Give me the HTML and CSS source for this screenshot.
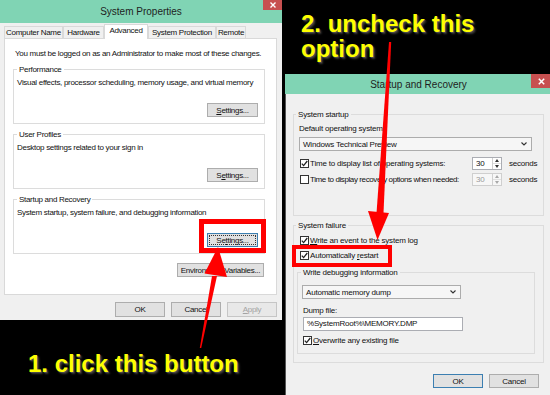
FILE: index.html
```html
<!DOCTYPE html>
<html>
<head>
<meta charset="utf-8">
<title>System Properties - Startup and Recovery</title>
<link rel="stylesheet" href="styles.css">
</head>
<body>
<div class="desk">

  <div class="win sys">
    <div class="tbar">
      <span class="ttl">System Properties</span>
      <span class="cls cls-sys"><svg width="6" height="6" viewBox="0 0 6 6"><path d="M0.5 0.5L5.5 5.5M5.5 0.5L0.5 5.5" stroke="#fff" stroke-width="1.4"/></svg></span>
    </div>
    <div class="tabs">
      <div class="tab t1">Computer Name</div>
      <div class="tab t2">Hardware</div>
      <div class="tab t3 sel">Advanced</div>
      <div class="tab t4">System Protection</div>
      <div class="tab t5">Remote</div>
    </div>
    <div class="panel">
      <div class="note">You must be logged on as an Administrator to make most of these changes.</div>
      <div class="grp">
        <div class="lgd">Performance</div>
        <div class="desc">Visual effects, processor scheduling, memory usage, and virtual memory</div>
        <div class="btn set"><u>S</u>ettings...</div>
      </div>
      <div class="grp">
        <div class="lgd">User Profiles</div>
        <div class="desc">Desktop settings related to your sign in</div>
        <div class="btn set">S<u>e</u>ttings...</div>
      </div>
      <div class="grp">
        <div class="lgd">Startup and Recovery</div>
        <div class="desc">System startup, system failure, and debugging information</div>
        <div class="btn set focus">Se<u>t</u>tings...</div>
      </div>
      <div class="btn env">Environme<u>n</u>t Variables...</div>
    </div>
    <div class="dlg">
      <div class="btn db">OK</div>
      <div class="btn db">Cancel</div>
      <div class="btn db dis"><u>A</u>pply</div>
    </div>
  </div>

  <div class="win sr">
    <div class="tbar sr-tbar">
      <span class="ttl">Startup and Recovery</span>
      <span class="cls cls-sr"><svg width="7" height="7" viewBox="0 0 7 7"><path d="M0.8 0.8L6.2 6.2M6.2 0.8L0.8 6.2" stroke="#fff" stroke-width="1.5"/></svg></span>
    </div>
    <div class="body">
      <div class="rgrp g-start">
        <div class="lgd rl">System startup</div>
        <div class="lbl">Default operating system:</div>
        <div class="dd dd1"><span>Windows Technical Preview</span><svg width="6" height="4" viewBox="0 0 6 4"><path d="M0.5 0.5L3 3L5.5 0.5" fill="none" stroke="#333" stroke-width="1.1"/></svg></div>
        <div class="row r1">
          <div class="cbl"><span class="cb"><svg width="7" height="7" viewBox="0 0 7 7"><path d="M0.8 3.6L2.6 5.6L6.3 1" fill="none" stroke="#222" stroke-width="1.3"/></svg></span><span>Time to display list of operating systems:</span></div>
          <div class="spin"><span class="v">30</span><span class="arr"><span class="up"></span><span class="dn"></span></span></div>
          <div>seconds</div>
        </div>
        <div class="row r2">
          <div class="cbl"><span class="cb"></span><span class="tight">Time to display recovery options when needed:</span></div>
          <div class="spin off"><span class="v">30</span><span class="arr"><span class="up"></span><span class="dn"></span></span></div>
          <div>seconds</div>
        </div>
      </div>

      <div class="rgrp g-fail">
        <div class="lgd rl">System failure</div>
        <div class="cbl crow c1"><span class="cb"><svg width="7" height="7" viewBox="0 0 7 7"><path d="M0.8 3.6L2.6 5.6L6.3 1" fill="none" stroke="#222" stroke-width="1.3"/></svg></span><span><u>W</u>rite an event to the system log</span></div>
        <div class="cbl crow c2"><span class="cb"><svg width="7" height="7" viewBox="0 0 7 7"><path d="M0.8 3.6L2.6 5.6L6.3 1" fill="none" stroke="#222" stroke-width="1.3"/></svg></span><span>Automatically <u>r</u>estart</span></div>
        <div class="sub">
          <div class="lgd sl">Write debugging information</div>
          <div class="dd dd2"><span>Automatic memory dump</span><svg width="6" height="4" viewBox="0 0 6 4"><path d="M0.5 0.5L3 3L5.5 0.5" fill="none" stroke="#333" stroke-width="1.1"/></svg></div>
          <div class="lbl dl">Dump file:</div>
          <div class="inp">%SystemRoot%\MEMORY.DMP</div>
          <div class="cbl crow c3"><span class="cb"><svg width="7" height="7" viewBox="0 0 7 7"><path d="M0.8 3.6L2.6 5.6L6.3 1" fill="none" stroke="#222" stroke-width="1.3"/></svg></span><span><u>O</u>verwrite any existing file</span></div>
        </div>
      </div>

      <div class="rdlg">
        <div class="btn db def">OK</div>
        <div class="btn db">Cancel</div>
      </div>
    </div>
  </div>

  <div class="hl hl1"></div>
  <div class="hl hl2"></div>

  <svg class="arrows" width="550" height="395" viewBox="0 0 550 395">
    <polygon points="199.8,348 201.2,348 217,276 212,276" fill="#ff0000"/>
    <polygon points="218,247 204.5,273.5 227,277" fill="#ff0000"/>
    <polygon points="389,42 391.2,42 383.5,213 376.5,213" fill="#ff0000"/>
    <polygon points="368,211 389,213 377.5,240" fill="#ff0000"/>
  </svg>

  <div class="ann ann1">1. click this button</div>
  <div class="ann ann2">2. uncheck this<br>option</div>
</div>
</body>
</html>
```

FILE: styles.css
```css
* { box-sizing: border-box; }
html, body { margin: 0; padding: 0; }
body {
  background: #000;
  width: 550px;
  height: 395px;
  overflow: hidden;
  font-family: "Liberation Sans", Arial, sans-serif;
  font-size: 8px;
  letter-spacing: -0.3px;
  line-height: 11px;
  color: #111;
}
u { text-decoration: underline; text-underline-offset: 1px; }

.desk { position: relative; width: 550px; height: 395px; overflow: hidden; }

.win { position: absolute; background: #f0f0f0; }
.sys { left: 0; top: 0; width: 282px; height: 320px; }
.sr { left: 285px; top: 74px; width: 267px; height: 321px; letter-spacing: -0.2px; }

.tbar {
  position: relative;
  height: 23px;
  background: #80d4b4;
  display: flex;
  align-items: center;
  justify-content: center;
  font-size: 10px;
  letter-spacing: 0;
  color: #1e1e1e;
}
.sr-tbar { height: 20px; }
.cls {
  position: absolute;
  top: 0;
  right: 0;
  background: #c75050;
  display: flex;
  align-items: center;
  justify-content: center;
}
.cls svg { display: block; }
.cls-sys { width: 19px; height: 10px; }
.cls-sr { width: 21px; height: 14px; }

/* tabs */
.tabs {
  height: 15px;
  display: flex;
  align-items: flex-end;
  padding-left: 4px;
}
.tab {
  height: 12px;
  border: 1px solid #d9d9d9;
  border-bottom: none;
  background: #f0f0f0;
  text-align: center;
  line-height: 11px;
  white-space: nowrap;
}
.tab.sel {
  height: 15px;
  background: #fff;
  margin-bottom: -1px;
  position: relative;
  z-index: 1;
  line-height: 12px;
}
.t1 { width: 59px; }
.t2 { width: 41px; }
.t3 { width: 44px; }
.t4 { width: 68px; }
.t5 { width: 30px; }

.panel {
  margin: 0 5px 0 4px;
  height: 257px;
  background: #fff;
  border: 1px solid #d9d9d9;
  padding: 9px 11px 0 8px;
}
.note { padding-left: 2px; white-space: nowrap; }

.grp {
  border: 1px solid #dcdcdc;
  height: 55px;
  margin-top: 10px;
  display: flex;
  flex-direction: column;
  align-items: flex-start;
  padding: 0 6px 6px 3px;
}
.lgd {
  margin-top: -6px;
  padding: 0 2px;
  background: #fff;
  white-space: nowrap;
}
.desc { margin-top: 2px; white-space: nowrap; }

.btn {
  border: 1px solid #adadad;
  background: #e1e1e1;
  display: flex;
  align-items: center;
  justify-content: center;
  white-space: nowrap;
}
.set { margin-top: auto; align-self: flex-end; width: 51px; height: 14px; }
.focus { position: relative; border-color: #3c7fb1; }
.focus::after {
  content: "";
  position: absolute;
  inset: 1px;
  border: 1px dotted #333;
}
.env { width: 87px; height: 14px; margin: 9px 1px 0 auto; }

.dlg {
  display: flex;
  justify-content: flex-end;
  gap: 6px;
  padding: 7px 5px 0 0;
}
.db { width: 50px; height: 15px; }
.dis { color: #a3a3a3; border-color: #c6c6c6; background: #e8e8e8; }

/* startup and recovery */
.body {
  height: 301px;
  border-left: 1px solid #555;
  padding: 20px 8px 0 7px;
}
.rgrp {
  border: 1px solid #dcdcdc;
  padding: 0 0 0 5px;
}
.rl { background: #f0f0f0; width: max-content; margin-left: -3px; }
.g-start { height: 102px; }
.g-fail { height: 138px; margin-top: 9px; }

.lbl { margin-top: 3px; white-space: nowrap; }

.dd {
  height: 14px;
  border: 1px solid #acacac;
  background: #f6f6f6;
  display: flex;
  align-items: center;
  justify-content: space-between;
  padding: 0 4px 0 3px;
  white-space: nowrap;
}
.dd svg { display: block; }
.dd1 { width: 233px; margin-top: 3px; }
.dd2 { width: 159px; margin: 7px 0 0 -1px; }

.row {
  display: grid;
  grid-template-columns: minmax(0, 1fr) 30px 34px;
  column-gap: 7px;
  align-items: center;
  width: 243px;
  height: 13px;
  margin-left: 1px;
  white-space: nowrap;
}
.r1 { margin-top: 6px; }
.r2 { margin-top: 3px; }
.tight { letter-spacing: -0.4px; }

.cbl { display: flex; align-items: center; gap: 1px; white-space: nowrap; }
.cb {
  width: 9px;
  height: 9px;
  border: 1px solid #333;
  background: #fff;
  display: flex;
  align-items: center;
  justify-content: center;
  flex: none;
}
.cb svg { display: block; }
.crow { height: 11px; margin-left: 1px; }
.c1 { margin-top: 4px; }
.c2 { margin-top: 4px; }
.c3 { margin-top: 4px; margin-left: 0; }

.spin {
  height: 13px;
  border: 1px solid #abadb3;
  background: #fff;
  display: flex;
}
.spin .v { flex: 1; padding-left: 3px; line-height: 11px; }
.spin .arr {
  width: 9px;
  border-left: 1px solid #d0d0d0;
  display: flex;
  flex-direction: column;
}
.spin .up, .spin .dn {
  flex: 1;
  display: flex;
  align-items: center;
  justify-content: center;
}
.spin .up::before {
  content: "";
  border-left: 2.5px solid transparent;
  border-right: 2.5px solid transparent;
  border-bottom: 3px solid #333;
}
.spin .dn::before {
  content: "";
  border-left: 2.5px solid transparent;
  border-right: 2.5px solid transparent;
  border-top: 3px solid #333;
}
.spin .dn { border-top: 1px solid #e0e0e0; }
.spin.off { border-color: #cfcfcf; background: #f7f7f7; color: #9a9a9a; }
.spin.off .up::before { border-bottom-color: #a8a8a8; }
.spin.off .dn::before { border-top-color: #a8a8a8; }

.sub {
  border: 1px solid #dcdcdc;
  height: 82px;
  width: 238px;
  margin: 11px 0 0 -2px;
  padding: 0 0 0 5px;
}
.sl { background: #f0f0f0; width: max-content; margin-left: -2px; }
.dl { margin-top: 6px; }
.inp {
  width: 160px;
  height: 14px;
  margin-top: 1px;
  border: 1px solid #abadb3;
  background: #fff;
  padding-left: 3px;
  line-height: 12px;
  white-space: nowrap;
}

.rdlg {
  display: flex;
  justify-content: flex-end;
  gap: 6px;
  margin: 11px 5px 0 0;
}
.rdlg .db { height: 14px; }
.def { border-color: #3c7fb1; }

/* annotations */
.hl { position: absolute; border: 5px solid #ff0000; }
.hl1 { left: 199px; top: 219px; width: 67px; height: 34px; }
.hl2 { left: 292px; top: 245px; width: 100px; height: 22px; border-width: 4px; }

.arrows { position: absolute; left: 0; top: 0; pointer-events: none; }

.ann {
  position: absolute;
  font-weight: bold;
  font-size: 24px;
  letter-spacing: 0;
  line-height: 25px;
  color: #ffff00;
  white-space: nowrap;
  text-shadow: 1px 1px 0 #4a4a4a, 2px 2px 2px #3a3a3a;
}
.ann1 { left: 28px; top: 351px; }
.ann2 { left: 301px; top: 11px; }
```
